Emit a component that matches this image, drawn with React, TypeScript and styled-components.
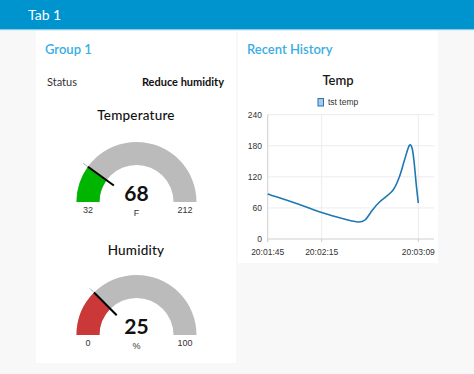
import * as React from 'react';
import styled, { createGlobalStyle } from 'styled-components';

const GlobalStyle = createGlobalStyle`
  html, body {
    margin: 0;
    padding: 0;
    background: #f8f8f8;
    font-family: Lato, "Open Sans", sans-serif;
    color: #222;
  }
`;

type GaugeProps = {
  value: number;
  min: number;
  max: number;
  units: string;
  color: string;
};

const CX = 100.5;
const CY = 67;
const R_OUT = 60;
const R_IN = 37;

const polar = (r: number, frac: number) => {
  const a = Math.PI * frac;
  return [CX - r * Math.cos(a), CY - r * Math.sin(a)];
};

const Gauge = ({ value, min, max, units, color }: GaugeProps) => {
  const frac = (value - min) / (max - min);
  const [ox, oy] = polar(R_OUT, frac);
  const [ix, iy] = polar(R_IN, frac);
  const [n1x, n1y] = polar(28, frac);
  const [n2x, n2y] = polar(R_OUT, frac);
  const [n3x, n3y] = polar(66, frac);
  const mid = (R_OUT + R_IN) / 2;

  const track = `M ${CX - R_OUT} ${CY} A ${R_OUT} ${R_OUT} 0 0 1 ${CX + R_OUT} ${CY} L ${CX + R_IN} ${CY} A ${R_IN} ${R_IN} 0 0 0 ${CX - R_IN} ${CY} Z`;
  const fill = `M ${CX - R_OUT} ${CY} A ${R_OUT} ${R_OUT} 0 0 1 ${ox} ${oy} L ${ix} ${iy} A ${R_IN} ${R_IN} 0 0 0 ${CX - R_IN} ${CY} Z`;

  return (
    <Styled.GaugeSvg width="200" height="93" viewBox="0 0 200 93">
      <path d={track} fill="#bbbbbb" />
      <path d={fill} fill={color} />
      <line x1={n2x} y1={n2y} x2={n3x} y2={n3y} stroke="#9fb8bf" strokeWidth="1" />
      <line x1={n1x} y1={n1y} x2={n2x} y2={n2y} stroke="#000" strokeWidth="2" />
      <Styled.GaugeValue x={CX} y={66}>{value}</Styled.GaugeValue>
      <Styled.GaugeLabel x={CX - mid} y={78}>{min}</Styled.GaugeLabel>
      <Styled.GaugeLabel x={CX} y={81}>{units}</Styled.GaugeLabel>
      <Styled.GaugeLabel x={CX + mid} y={78}>{max}</Styled.GaugeLabel>
    </Styled.GaugeSvg>
  );
};

// chart geometry (svg coords)
const PLOT_L = 29.7;
const PLOT_R = 196;
const PLOT_B = 146;
const PX_PER_UNIT = 0.518;
const yFor = (v: number) => PLOT_B - v * PX_PER_UNIT;

const points: [number, number][] = [
  [29.7, 101],
  [60, 111],
  [83.7, 119.5],
  [108, 126.5],
  [120, 129],
  [127, 127],
  [134.5, 117],
  [141.5, 109],
  [154.7, 97.5],
  [161.3, 84],
  [166.5, 67],
  [171.3, 52.5],
  [174.3, 56],
  [176.3, 71],
  [178.5, 94],
  [180.3, 110],
];

const smoothPath = (pts: [number, number][]) => {
  let d = `M ${pts[0][0]} ${pts[0][1]}`;
  for (let i = 0; i < pts.length - 1; i++) {
    const p0 = pts[i - 1] || pts[i];
    const p1 = pts[i];
    const p2 = pts[i + 1];
    const p3 = pts[i + 2] || p2;
    const c1x = p1[0] + (p2[0] - p0[0]) / 6;
    const c1y = p1[1] + (p2[1] - p0[1]) / 6;
    const c2x = p2[0] - (p3[0] - p1[0]) / 6;
    const c2y = p2[1] - (p3[1] - p1[1]) / 6;
    d += ` C ${c1x.toFixed(1)} ${c1y.toFixed(1)} ${c2x.toFixed(1)} ${c2y.toFixed(1)} ${p2[0]} ${p2[1]}`;
  }
  return d;
};

const xTicks = [
  { x: 29.7, label: '20:01:45' },
  { x: 83.7, label: '20:02:15' },
  { x: 180.3, label: '20:03:09' },
];

const LineChart = () => (
  <svg width="200" height="170" viewBox="0 0 200 170">
    <rect x="80" y="5.5" width="5.5" height="7.5" fill="#aec7e8" stroke="#1f77b4" strokeWidth="1" />
    <Styled.ChartText x="90" y="12">tst temp</Styled.ChartText>
    {[60, 120, 180, 240].map((v) => (
      <line key={v} x1={PLOT_L} x2={PLOT_R} y1={yFor(v)} y2={yFor(v)} stroke="#ececec" strokeWidth="1" />
    ))}
    {xTicks.slice(1).map((t) => (
      <line key={t.label} x1={t.x} x2={t.x} y1={yFor(240)} y2={PLOT_B} stroke="#ececec" strokeWidth="1" />
    ))}
    <line x1={PLOT_L} x2={PLOT_L} y1={yFor(240)} y2={PLOT_B + 3} stroke="#cfcfcf" strokeWidth="1" />
    <line x1={PLOT_L} x2={PLOT_R} y1={PLOT_B} y2={PLOT_B} stroke="#cfcfcf" strokeWidth="1" />
    {xTicks.map((t) => (
      <line key={t.label + 'k'} x1={t.x} x2={t.x} y1={PLOT_B} y2={PLOT_B + 3} stroke="#cfcfcf" strokeWidth="1" />
    ))}
    {[0, 60, 120, 180, 240].map((v) => (
      <Styled.ChartText key={v} x="24" y={yFor(v) + 3} textAnchor="end">
        {v}
      </Styled.ChartText>
    ))}
    {xTicks.map((t) => (
      <Styled.ChartText key={t.label + 't'} x={t.x} y="162" textAnchor="middle">
        {t.label}
      </Styled.ChartText>
    ))}
    <path d={smoothPath(points)} fill="none" stroke="#1f77b4" strokeWidth="1.6" />
  </svg>
);

const App = () => (
  <>
    <GlobalStyle />
    <Styled.Header>Tab 1</Styled.Header>
    <Styled.Content>
      <Styled.Group height={332}>
        <Styled.GroupTitle>Group 1</Styled.GroupTitle>
        <Styled.TextRow>
          <span>Status</span>
          <Styled.Strong>Reduce humidity</Styled.Strong>
        </Styled.TextRow>
        <Styled.WidgetTitle>Temperature</Styled.WidgetTitle>
        <Gauge value={68} min={32} max={212} units="F" color="#00b500" />
        <Styled.WidgetTitle lift={2}>Humidity</Styled.WidgetTitle>
        <Gauge value={25} min={0} max={100} units="%" color="#ca3838" />
      </Styled.Group>
      <Styled.Group height={232}>
        <Styled.GroupTitle>Recent History</Styled.GroupTitle>
        <Styled.ChartTitle>Temp</Styled.ChartTitle>
        <LineChart />
      </Styled.Group>
    </Styled.Content>
  </>
);

const Styled = {
  Header: styled.header`
    height: 29px;
    line-height: 29px;
    background: #0094ce;
    color: #fff;
    font-size: 14px;
    padding-left: 28px;
    box-shadow: 0 1px 1px rgba(0, 148, 206, 0.45);
  `,
  Content: styled.main`
    display: flex;
    align-items: flex-start;
    gap: 2px;
    padding: 2px 0 0 36px;
  `,
  Group: styled.section<{ height: number }>`
    width: 200px;
    height: ${(props) => props.height}px;
    background: #fff;
    display: flex;
    flex-direction: column;
    overflow: hidden;
  `,
  GroupTitle: styled.h2`
    margin: 0;
    height: 36px;
    line-height: 36px;
    padding-left: 9px;
    font-size: 13px;
    font-weight: 600;
    color: #3aaee2;
  `,
  TextRow: styled.div`
    height: 28px;
    display: flex;
    align-items: center;
    justify-content: space-between;
    padding: 0 12px 0 11px;
    font-size: 11px;
    color: #333;
  `,
  Strong: styled.span`
    font-weight: 700;
    color: #111;
  `,
  WidgetTitle: styled.div<{ lift?: number }>`
    height: 40px;
    line-height: 40px;
    padding-top: ${(props) => props.lift || 0}px;
    margin-bottom: -${(props) => props.lift || 0}px;
    text-align: center;
    font-size: 13.5px;
    font-weight: 500;
    color: #111;
    letter-spacing: 0.2px;
  `,
  ChartTitle: styled.div`
    height: 26px;
    line-height: 26px;
    text-align: center;
    font-size: 13px;
    font-weight: 600;
    color: #1a1a1a;
  `,
  GaugeSvg: styled.svg`
    display: block;
    flex: none;
  `,
  GaugeValue: styled.text`
    font-family: Lato, "Open Sans", sans-serif;
    font-size: 21px;
    font-weight: 700;
    fill: #111;
    text-anchor: middle;
  `,
  GaugeLabel: styled.text`
    font-family: "Liberation Sans", Arial, sans-serif;
    font-size: 9px;
    fill: #333;
    text-anchor: middle;
  `,
  ChartText: styled.text`
    font-family: "Liberation Sans", Arial, sans-serif;
    font-size: 8.5px;
    fill: #333;
  `,
};

export default App;
